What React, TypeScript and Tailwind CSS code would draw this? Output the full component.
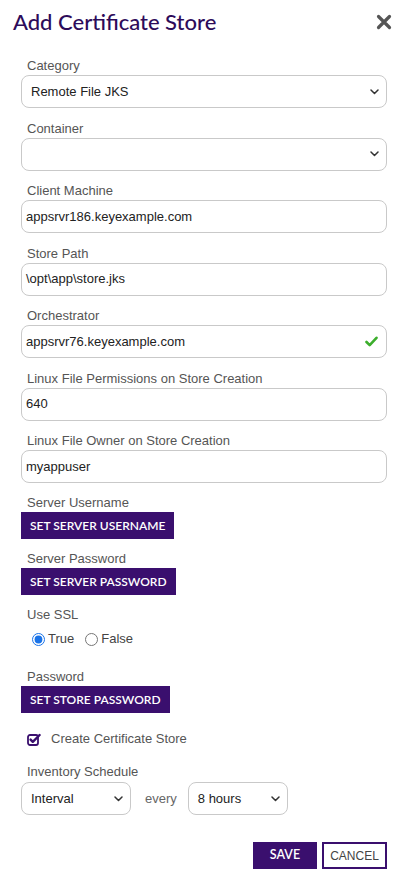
import type { ReactNode } from 'react';

const purple = 'bg-[#3a0f6e]';

function Label({ children, className = '' }: { children: ReactNode; className?: string }) {
  return <div className={`h-4 pl-[6px] text-[13px] leading-4 text-[#555] ${className}`}>{children}</div>;
}

function Chevron() {
  return (
    <svg width="9" height="6" viewBox="0 0 9 6" className="shrink-0" aria-hidden>
      <path d="M1 1l3.5 3.5L8 1" fill="none" stroke="#333" strokeWidth="1.5" strokeLinecap="round" strokeLinejoin="round" />
    </svg>
  );
}

function SelectBox({ value, className = '' }: { value: string; className?: string }) {
  return (
    <div className={`flex h-[33px] items-center justify-between rounded-[8px] border border-[#c9c9c9] bg-white pl-[9px] pr-[7px] text-[13px] text-[#222] ${className}`}>
      <span>{value}</span>
      <Chevron />
    </div>
  );
}

function TextBox({ value, valid = false }: { value: string; valid?: boolean }) {
  return (
    <div className="flex h-[33px] items-center justify-between rounded-[8px] border border-[#c9c9c9] bg-white pl-[4px] pr-[8px] text-[13px] text-[#222]">
      <span>{value}</span>
      {valid ? (
        <svg width="13" height="11" viewBox="0 0 13 11" aria-hidden>
          <path d="M1.5 6l3.2 3.2L11.5 1.8" fill="none" stroke="#3cae2c" strokeWidth="2.6" strokeLinecap="round" strokeLinejoin="round" />
        </svg>
      ) : null}
    </div>
  );
}

function Field({ label, children, first = false }: { label: string; children: ReactNode; first?: boolean }) {
  return (
    <div className={first ? 'mt-[22px]' : 'mt-[12.5px]'}>
      <Label>{label}</Label>
      <div className="mt-px">{children}</div>
    </div>
  );
}

function PurpleButton({ children }: { children: ReactNode }) {
  return (
    <button
      type="button"
      className={`mt-[1.5px] flex h-[27px] items-center ${purple} px-[9px] font-['Lato',sans-serif] text-[12px] font-semibold text-white`}
    >
      {children}
    </button>
  );
}

export default function App() {
  return (
    <div className="min-h-[885px] w-[407px] bg-white font-['Liberation_Sans',Arial,sans-serif]">
      <div className="flex h-[28px] translate-y-[8px] items-center justify-between pl-[13px] pr-[15px]">
        <h1 className="font-['Lato',sans-serif] text-[22px] font-medium leading-7 text-[#2d0b5a]">Add Certificate Store</h1>
        <svg width="16" height="16" viewBox="0 0 16 16" aria-label="close">
          <path d="M2.5 2.5l11 11M13.5 2.5l-11 11" stroke="#555" strokeWidth="3.2" strokeLinecap="round" />
        </svg>
      </div>

      <div className="pl-[21px] pr-[20px] pt-[8px]">
        <Field label="Category" first>
          <SelectBox value="Remote File JKS" />
        </Field>
        <Field label="Container">
          <SelectBox value="" />
        </Field>
        <Field label="Client Machine">
          <TextBox value="appsrvr186.keyexample.com" />
        </Field>
        <Field label="Store Path">
          <TextBox value="\opt\app\store.jks" />
        </Field>
        <Field label="Orchestrator">
          <TextBox value="appsrvr76.keyexample.com" valid />
        </Field>
        <Field label="Linux File Permissions on Store Creation">
          <TextBox value="640" />
        </Field>
        <Field label="Linux File Owner on Store Creation">
          <TextBox value="myappuser" />
        </Field>

        <Label className="mt-[11.5px]">Server Username</Label>
        <PurpleButton>SET SERVER USERNAME</PurpleButton>

        <Label className="mt-[11.5px]">Server Password</Label>
        <PurpleButton>SET SERVER PASSWORD</PurpleButton>

        <Label className="mt-[11.5px]">Use SSL</Label>
        <div className="mt-[6.5px] flex h-5 items-center pl-[11px] text-[13px] text-[#444]">
          <label className="flex items-center gap-[3px]">
            <input type="radio" name="ssl" defaultChecked className="m-0 h-[13px] w-[13px] accent-[#1a73e8]" />
            True
          </label>
          <label className="ml-[11px] flex items-center gap-[3px]">
            <input type="radio" name="ssl" className="m-0 h-[13px] w-[13px] accent-[#1a73e8]" />
            False
          </label>
        </div>

        <Label className="mt-[19.5px]">Password</Label>
        <PurpleButton>SET STORE PASSWORD</PurpleButton>

        <div className="mt-[16px] flex h-5 items-center pl-[6px] text-[13px] text-[#555]">
          <svg width="14" height="13" viewBox="0 0 14 13" aria-hidden>
            <rect x="1" y="2" width="10" height="10" rx="2" fill="none" stroke="#3a0f6e" strokeWidth="1.8" />
            <path d="M3.6 6.6l2.2 2.2L12.6 2" fill="none" stroke="#3a0f6e" strokeWidth="2.4" strokeLinecap="round" strokeLinejoin="round" />
          </svg>
          <span className="ml-[10px]">Create Certificate Store</span>
        </div>

        <Label className="mt-[15px]">Inventory Schedule</Label>
        <div className="mt-[2px] flex items-center">
          <SelectBox value="Interval" className="w-[110px]" />
          <span className="ml-[14px] mr-[11px] text-[13px] text-[#666]">every</span>
          <SelectBox value="8 hours" className="w-[100px]" />
        </div>

        <div className="mt-[27px] flex justify-end gap-[5px]">
          <button type="button" className={`h-[27px] w-[64px] ${purple} font-['Lato',sans-serif] text-[12.5px] font-semibold text-white`}>
            SAVE
          </button>
          <button
            type="button"
            className="h-[27px] w-[65px] border-2 border-[#3a0f6e] bg-white text-[12px] text-[#444]"
          >
            CANCEL
          </button>
        </div>
      </div>
    </div>
  );
}
